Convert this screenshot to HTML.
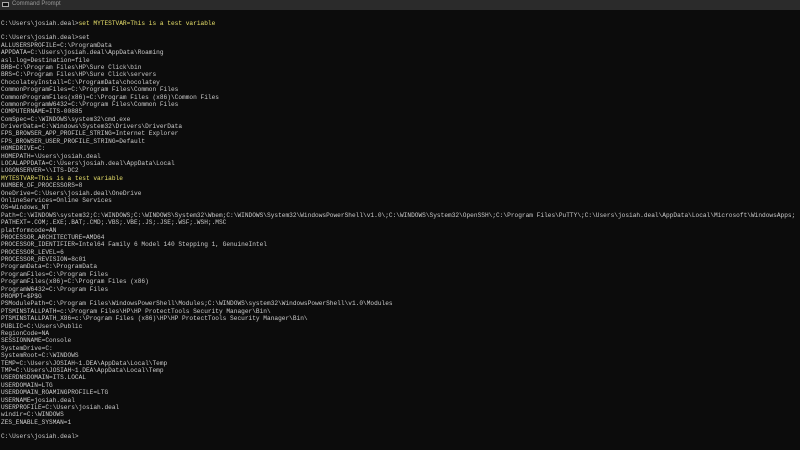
<!DOCTYPE html>
<html><head><meta charset="utf-8"><style>
html,body{margin:0;padding:0;width:800px;height:450px;overflow:hidden;background:#0c0c0c}
.tb{position:absolute;left:0;top:0;width:800px;height:10px;background:#2b2b2b}
.tb .ic{position:absolute;left:2px;top:2px;width:7px;height:5px;border:1px solid #aaa;box-sizing:border-box;background:#111}
.tb span{position:absolute;left:12px;top:1px;font:6px "Liberation Sans",sans-serif;color:#9a9a9a}
pre{position:absolute;left:1px;top:19.6px;margin:0;font-family:"Liberation Mono",monospace;font-size:6.16px;line-height:7.395px;color:#cccccc;white-space:pre}
.y{color:#e8e06a}
</style></head><body>
<div class="tb"><div class="ic"></div><span>Command Prompt</span></div>
<pre>C:\Users\josiah.deal&gt;<span class="y">set MYTESTVAR=This is a test variable</span>

C:\Users\josiah.deal&gt;set
ALLUSERSPROFILE=C:\ProgramData
APPDATA=C:\Users\josiah.deal\AppData\Roaming
asl.log=Destination=file
BRB=C:\Program Files\HP\Sure Click\bin
BRS=C:\Program Files\HP\Sure Click\servers
ChocolateyInstall=C:\ProgramData\chocolatey
CommonProgramFiles=C:\Program Files\Common Files
CommonProgramFiles(x86)=C:\Program Files (x86)\Common Files
CommonProgramW6432=C:\Program Files\Common Files
COMPUTERNAME=ITS-00885
ComSpec=C:\WINDOWS\system32\cmd.exe
DriverData=C:\Windows\System32\Drivers\DriverData
FPS_BROWSER_APP_PROFILE_STRING=Internet Explorer
FPS_BROWSER_USER_PROFILE_STRING=Default
HOMEDRIVE=C:
HOMEPATH=\Users\josiah.deal
LOCALAPPDATA=C:\Users\josiah.deal\AppData\Local
LOGONSERVER=\\ITS-DC2
<span class="y">MYTESTVAR=This is a test variable</span>
NUMBER_OF_PROCESSORS=8
OneDrive=C:\Users\josiah.deal\OneDrive
OnlineServices=Online Services
OS=Windows_NT
Path=C:\WINDOWS\system32;C:\WINDOWS;C:\WINDOWS\System32\Wbem;C:\WINDOWS\System32\WindowsPowerShell\v1.0\;C:\WINDOWS\System32\OpenSSH\;C:\Program Files\PuTTY\;C:\Users\josiah.deal\AppData\Local\Microsoft\WindowsApps;
PATHEXT=.COM;.EXE;.BAT;.CMD;.VBS;.VBE;.JS;.JSE;.WSF;.WSH;.MSC
platformcode=AN
PROCESSOR_ARCHITECTURE=AMD64
PROCESSOR_IDENTIFIER=Intel64 Family 6 Model 140 Stepping 1, GenuineIntel
PROCESSOR_LEVEL=6
PROCESSOR_REVISION=8c01
ProgramData=C:\ProgramData
ProgramFiles=C:\Program Files
ProgramFiles(x86)=C:\Program Files (x86)
ProgramW6432=C:\Program Files
PROMPT=$P$G
PSModulePath=C:\Program Files\WindowsPowerShell\Modules;C:\WINDOWS\system32\WindowsPowerShell\v1.0\Modules
PTSMINSTALLPATH=c:\Program Files\HP\HP ProtectTools Security Manager\Bin\
PTSMINSTALLPATH_X86=c:\Program Files (x86)\HP\HP ProtectTools Security Manager\Bin\
PUBLIC=C:\Users\Public
RegionCode=NA
SESSIONNAME=Console
SystemDrive=C:
SystemRoot=C:\WINDOWS
TEMP=C:\Users\JOSIAH~1.DEA\AppData\Local\Temp
TMP=C:\Users\JOSIAH~1.DEA\AppData\Local\Temp
USERDNSDOMAIN=ITS.LOCAL
USERDOMAIN=LTG
USERDOMAIN_ROAMINGPROFILE=LTG
USERNAME=josiah.deal
USERPROFILE=C:\Users\josiah.deal
windir=C:\WINDOWS
ZES_ENABLE_SYSMAN=1

C:\Users\josiah.deal&gt;</pre>
</body></html>
